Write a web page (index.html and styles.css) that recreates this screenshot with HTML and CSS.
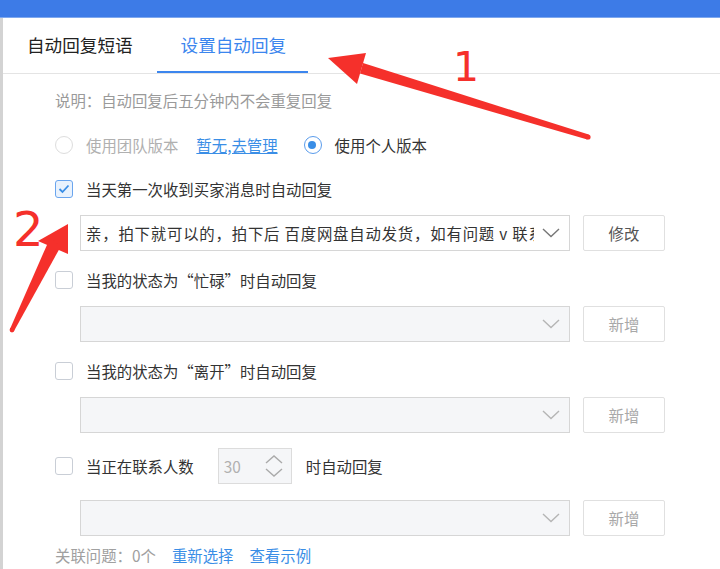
FILE: index.html
```html
<!DOCTYPE html>
<html lang="zh-CN">
<head>
    <meta charset="UTF-8">
    <title>设置自动回复</title>
    <link rel="stylesheet" href="styles.css">
</head>
<body>
    <div class="topbar"></div>

    <div class="panel">
        <div class="tabs">
            <div class="tab">自动回复短语</div>
            <div class="tab active">设置自动回复</div>
        </div>

        <div class="content">
            <p class="note">说明：自动回复后五分钟内不会重复回复</p>

            <div class="radio-row">
                <label class="radio disabled"><span class="radio-dot"></span>使用团队版本</label>
                <a class="link underline" href="#">暂无,去管理</a>
                <label class="radio checked"><span class="radio-dot"></span>使用个人版本</label>
            </div>

            <label class="check-row first">
                <span class="checkbox checked">
                    <svg width="12" height="10" viewBox="0 0 12 10"><polyline points="1.5,5 4.5,8 10.5,1.5" fill="none" stroke="#3a8ee6" stroke-width="1.8"/></svg>
                </span>
                当天第一次收到买家消息时自动回复
            </label>
            <div class="select-row">
                <div class="select">
                    <span class="select-text">亲，拍下就可以的，拍下后 百度网盘自动发货，如有问题 v 联系</span>
                    <svg class="chevron" width="18" height="10" viewBox="0 0 18 10"><polyline points="1,1 9,8.5 17,1" fill="none" stroke="#777" stroke-width="1.4"/></svg>
                </div>
                <button class="btn">修改</button>
            </div>

            <label class="check-row">
                <span class="checkbox"></span>
                当我的状态为“忙碌”时自动回复
            </label>
            <div class="select-row">
                <div class="select disabled">
                    <svg class="chevron" width="18" height="10" viewBox="0 0 18 10"><polyline points="1,1 9,8.5 17,1" fill="none" stroke="#b5b5b5" stroke-width="1.4"/></svg>
                </div>
                <button class="btn disabled">新增</button>
            </div>

            <label class="check-row">
                <span class="checkbox"></span>
                当我的状态为“离开”时自动回复
            </label>
            <div class="select-row">
                <div class="select disabled">
                    <svg class="chevron" width="18" height="10" viewBox="0 0 18 10"><polyline points="1,1 9,8.5 17,1" fill="none" stroke="#b5b5b5" stroke-width="1.4"/></svg>
                </div>
                <button class="btn disabled">新增</button>
            </div>

            <div class="number-row">
                <label class="check-row inline">
                    <span class="checkbox"></span>
                    当正在联系人数
                </label>
                <div class="number-input">
                    <span>30</span>
                    <svg width="20" height="24" viewBox="0 0 20 24"><polyline points="2,9 10,2 18,9" fill="none" stroke="#aaa" stroke-width="1.4"/><polyline points="2,15 10,22 18,15" fill="none" stroke="#aaa" stroke-width="1.4"/></svg>
                </div>
                <span class="after">时自动回复</span>
            </div>
            <div class="select-row">
                <div class="select disabled">
                    <svg class="chevron" width="18" height="10" viewBox="0 0 18 10"><polyline points="1,1 9,8.5 17,1" fill="none" stroke="#b5b5b5" stroke-width="1.4"/></svg>
                </div>
                <button class="btn disabled">新增</button>
            </div>

            <div class="footer-row">
                <span class="muted">关联问题：0个</span>
                <a class="link" href="#">重新选择</a>
                <a class="link" href="#">查看示例</a>
            </div>
        </div>
    </div>

    <!-- 标注箭头 -->
    <svg class="annotations" width="720" height="569" viewBox="0 0 720 569">
        <polygon points="328,58 366,53 357,84" fill="#f5302b"/>
        <polygon points="363,63 588.7,134.6 587.3,139.4 360,73.6" fill="#f5302b"/>
        <circle cx="588" cy="137" r="2.6" fill="#f5302b"/>
        <polygon points="68,224 38,241 68,254" fill="#f5302b"/>
        <polygon points="50,238 61,246 14,331 10,329" fill="#f5302b"/>
        <circle cx="12" cy="330" r="2.4" fill="#f5302b"/>
        <text x="453" y="81" class="anno-num">1</text>
        <text x="13" y="246" class="anno-num big">2</text>
    </svg>
</body>
</html>
```

FILE: styles.css
```css
* {
    margin: 0;
    padding: 0;
    box-sizing: border-box;
}

body {
    width: 720px;
    height: 569px;
    overflow: hidden;
    background-color: #fff;
    color: #333;
    font-family: "Noto Sans CJK SC", "Noto Sans", sans-serif;
    font-size: 15.4px;
    position: relative;
}

.topbar {
    height: 18px;
    background-color: #3d7be7;
    border-bottom: 1px solid #7fa8ee;
}

.panel {
    border-left: 3px solid #d3d3d3;
    height: 551px;
}

.tabs {
    display: flex;
    height: 56px;
    border-bottom: 1px solid #e4e4e4;
    padding-left: 24px;
}

.tab {
    font-size: 17.6px;
    line-height: 54px;
    color: #222;
    padding-right: 24px;
}

.tab.active {
    color: #3c86ee;
    border-bottom: 2px solid #3c86ee;
    padding: 0 22px 0 24px;
}

.content {
    padding-left: 52px;
}

.note {
    color: #9a9a9a;
    line-height: 22px;
    margin-top: 15px;
}

.radio-row {
    display: flex;
    align-items: center;
    height: 22px;
    margin-top: 23px;
}

.radio {
    display: flex;
    align-items: center;
    gap: 13px;
}

.radio-dot {
    width: 18px;
    height: 18px;
    border-radius: 50%;
    border: 1px solid #ddd;
    display: inline-block;
    position: relative;
}

.radio.disabled {
    color: #b0b0b0;
}

.radio.checked .radio-dot {
    border: 1.5px solid #5a9cec;
}

.radio.checked .radio-dot::after {
    content: "";
    position: absolute;
    left: 3.5px;
    top: 3.5px;
    width: 8px;
    height: 8px;
    border-radius: 50%;
    background-color: #3a8ee6;
}

.link {
    color: #3a8ee6;
    text-decoration: none;
}

.link.underline {
    text-decoration: underline;
    margin: 0 26px 0 18px;
}

.check-row {
    display: flex;
    align-items: center;
    gap: 13px;
    height: 20px;
    margin-top: 19px;
}

.check-row.first {
    margin-top: 23px;
}

.check-row.inline {
    margin-top: 0;
}

.checkbox {
    width: 18px;
    height: 18px;
    border: 1px solid #c9ced6;
    border-radius: 3px;
    display: inline-flex;
    align-items: center;
    justify-content: center;
}

.checkbox.checked {
    border-color: #6aa5ee;
    background-color: #e9f2fd;
}

.select-row {
    display: flex;
    gap: 13px;
    margin: 16px 0 0 25px;
}

.select {
    width: 490px;
    height: 36px;
    border: 1px solid #d6d6d6;
    display: flex;
    align-items: center;
    padding: 0 9px 0 5px;
    gap: 8px;
}

.select.disabled {
    background-color: #f5f6f8;
    justify-content: flex-end;
}

.select-text {
    flex: 1;
    white-space: nowrap;
    overflow: hidden;
    color: #333;
    letter-spacing: 0.8px;
}

.chevron {
    flex-shrink: 0;
}

.btn {
    width: 82px;
    height: 36px;
    border: 1px solid #e0e0e0;
    border-radius: 2px;
    background-color: #fff;
    font-family: inherit;
    font-size: 15.4px;
    color: #555;
}

.btn.disabled {
    color: #a8a8a8;
}

.number-row {
    display: flex;
    align-items: center;
    margin-top: 15px;
}

.number-input {
    width: 74px;
    height: 36px;
    margin-left: 24px;
    border: 1px solid #dcdcdc;
    background-color: #f5f6f8;
    display: flex;
    align-items: center;
    justify-content: space-between;
    padding: 0 7px 0 5px;
    color: #b0b0b0;
}

.after {
    margin-left: 14px;
}

.footer-row {
    display: flex;
    gap: 16px;
    margin-top: 8px;
    line-height: 22px;
}

.muted {
    color: #a0a0a0;
}

.annotations {
    position: absolute;
    left: 0;
    top: 0;
    pointer-events: none;
}

.anno-num {
    fill: #f5302b;
    font-family: "DejaVu Sans", sans-serif;
    font-size: 41px;
}

.anno-num.big {
    font-size: 48px;
}
```
